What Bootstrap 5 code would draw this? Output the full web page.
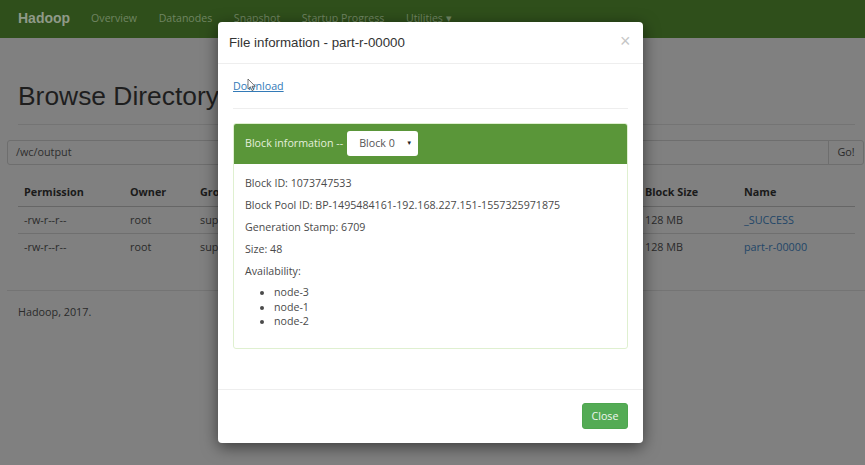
<!DOCTYPE html>
<html lang="en">
<head>
<meta charset="utf-8">
<title>Hadoop</title>
<link rel="stylesheet" href="https://cdn.jsdelivr.net/npm/bootstrap@5.3.0/dist/css/bootstrap.min.css">
<style>
html,body{height:465px;overflow:hidden}
body{font-family:"Open Sans","Liberation Sans",sans-serif;font-size:11px;color:#2a2a2a;background:#808080}
.hd-nav{background:#2f4f1b;height:37.5px;padding:0 18px;display:flex;align-items:center}
.hd-brand{font-family:"Liberation Sans",sans-serif;font-size:14px;font-weight:700;color:#8f9a88;margin-right:21px;text-decoration:none}
.hd-link{color:#6f8562;font-size:10.6px;margin-right:21.6px;text-decoration:none;white-space:nowrap}
.hd-title{font-family:"Liberation Sans",sans-serif;font-size:26.4px;font-weight:400;margin:42px 0 0 18px;line-height:32px;color:#1e1e1e;white-space:nowrap}
.hd-rule{margin:0;opacity:1;border-color:#747474}
.hd-rule-a{margin:12px 10px 0 18px}
.hd-path{margin:15px 1px 0 7px;height:25px;display:flex}
.hd-path-in{flex:1;border:1px solid #6e6e6e;border-radius:3px 0 0 3px;padding:1px 8px;font-size:10.8px;line-height:19px;color:#2e2e2e}
.hd-path-go{width:36px;border:1px solid #6e6e6e;border-radius:0 3px 3px 0;margin-left:-1px;text-align:center;line-height:22px;color:#2a2a2a;font-size:10.8px}
.hd-table{margin:14px 10px 0 18px;width:837px;table-layout:fixed;border-collapse:collapse}
.hd-table th,.hd-table td{padding:0 6px;font-size:10.8px;height:27.5px;vertical-align:middle;border-bottom:1px solid #6f6f6f;white-space:nowrap;overflow:hidden;background:transparent;color:#2a2a2a}
.hd-table th{font-weight:700;color:#1a1a1a;border-bottom-color:#666}
.hd-table tr:last-child td{border-bottom:0}
.hd-table a{color:#1f4668;text-decoration:none}
.hd-rule-b{margin:29px 0 0 7px}
.hd-foot{margin:13px 0 0 18px;font-size:10.8px}
.hd-layer{position:absolute;left:218px;top:22px;width:424.5px;z-index:1055}
.hd-content{height:421px;background:#fff;color:#333;border:0;border-radius:4px;box-shadow:0 4px 16px rgba(0,0,0,.55);position:relative;overflow:hidden}
.hd-head{height:42px;padding:0 11px;display:flex;align-items:center;justify-content:space-between;border-bottom:1px solid #eee}
.hd-mtitle{font-family:"Liberation Sans",sans-serif;font-size:13.3px;color:#333;margin:0;font-weight:400}
.hd-x{font-family:"Liberation Sans",sans-serif;font-size:18px;line-height:1;color:#c6c6c6;margin:-4px 1px 0 0}
.hd-body{padding:14px 15px 0;height:325px}
.hd-dl{color:#337ab7;font-size:10.7px;display:block;line-height:16px}
.hd-rule-m{margin:14px 0 14px;border-color:#eee}
.hd-panel{border:1px solid #dff0d0;border-radius:3px;height:226px;overflow:hidden}
.hd-phead{height:41px;margin:-1px -1px 0;background:#5a9639;color:#e4efdc;display:flex;align-items:center;padding-left:12px;font-size:10.7px;gap:4px}
.hd-select{height:25px;width:71px;background:#fff;color:#555;border-radius:3px;display:flex;align-items:center;justify-content:space-between;padding:0 6px 0 12px;font-size:10.7px}
.hd-caret{font-size:6px;color:#222}
.hd-pbody{padding:11px 11px 0;font-size:10.65px;color:#4a4a4a}
.hd-pbody p{margin:0 0 6px;line-height:16px}
.hd-pbody ul{margin:1.6px 0 0;padding-left:29px;line-height:14.7px}
.hd-mfoot{border-top:1px solid #eee;height:54px;padding:13px 14.5px 0;display:flex;justify-content:flex-end}
.hd-close{width:46px;height:26px;padding:0;background:#54ab55;border:1px solid #4ea64f;border-radius:3px;font-size:10.7px;line-height:24px;color:#f0f6ee}
.hd-cursor{position:absolute;left:29px;top:56px;width:9px;height:14px}
</style>
</head>
<body>
<nav class="hd-nav">
  <a class="hd-brand" href="#">Hadoop</a>
  <a class="hd-link" href="#">Overview</a>
  <a class="hd-link" href="#">Datanodes</a>
  <a class="hd-link" href="#">Snapshot</a>
  <a class="hd-link" href="#">Startup Progress</a>
  <a class="hd-link" href="#">Utilities ▾</a>
</nav>
<main>
  <h1 class="hd-title">Browse Directory</h1>
  <hr class="hd-rule hd-rule-a">
  <div class="hd-path"><div class="hd-path-in">/wc/output</div><div class="hd-path-go">Go!</div></div>
  <table class="hd-table">
    <colgroup><col style="width:106px"><col style="width:70px"><col style="width:445px"><col style="width:99px"><col></colgroup>
    <thead><tr><th>Permission</th><th>Owner</th><th>Group</th><th>Block Size</th><th>Name</th></tr></thead>
    <tbody>
      <tr><td>-rw-r--r--</td><td>root</td><td>supergroup</td><td>128 MB</td><td><a href="#">_SUCCESS</a></td></tr>
      <tr><td>-rw-r--r--</td><td>root</td><td>supergroup</td><td>128 MB</td><td><a href="#">part-r-00000</a></td></tr>
    </tbody>
  </table>
  <hr class="hd-rule hd-rule-b">
  <p class="hd-foot">Hadoop, 2017.</p>
</main>
<div class="hd-layer">
  <div class="modal-content hd-content">
    <div class="hd-head">
      <h5 class="hd-mtitle">File information - part-r-00000</h5>
      <span class="hd-x">×</span>
    </div>
    <div class="hd-body">
      <a class="hd-dl" href="#">Download</a>
      <hr class="hd-rule hd-rule-m">
      <div class="hd-panel">
        <div class="hd-phead">Block information -- <div class="hd-select"><span>Block 0</span><span class="hd-caret">▼</span></div></div>
        <div class="hd-pbody">
          <p>Block ID: 1073747533</p>
          <p>Block Pool ID: BP-1495484161-192.168.227.151-1557325971875</p>
          <p>Generation Stamp: 6709</p>
          <p>Size: 48</p>
          <p>Availability:</p>
          <ul><li>node-3</li><li>node-1</li><li>node-2</li></ul>
        </div>
      </div>
    </div>
    <div class="hd-mfoot"><button type="button" class="btn hd-close">Close</button></div>
    <svg class="hd-cursor" viewBox="0 0 9 14"><path d="M1 1v10l2.4-2.2 1.6 3.8 1.6-.7-1.6-3.6h3.2z" fill="#fff" stroke="#555" stroke-width=".8"/></svg>
  </div>
</div>
<script src="https://cdn.jsdelivr.net/npm/bootstrap@5.3.0/dist/js/bootstrap.bundle.min.js"></script>
</body>
</html>
